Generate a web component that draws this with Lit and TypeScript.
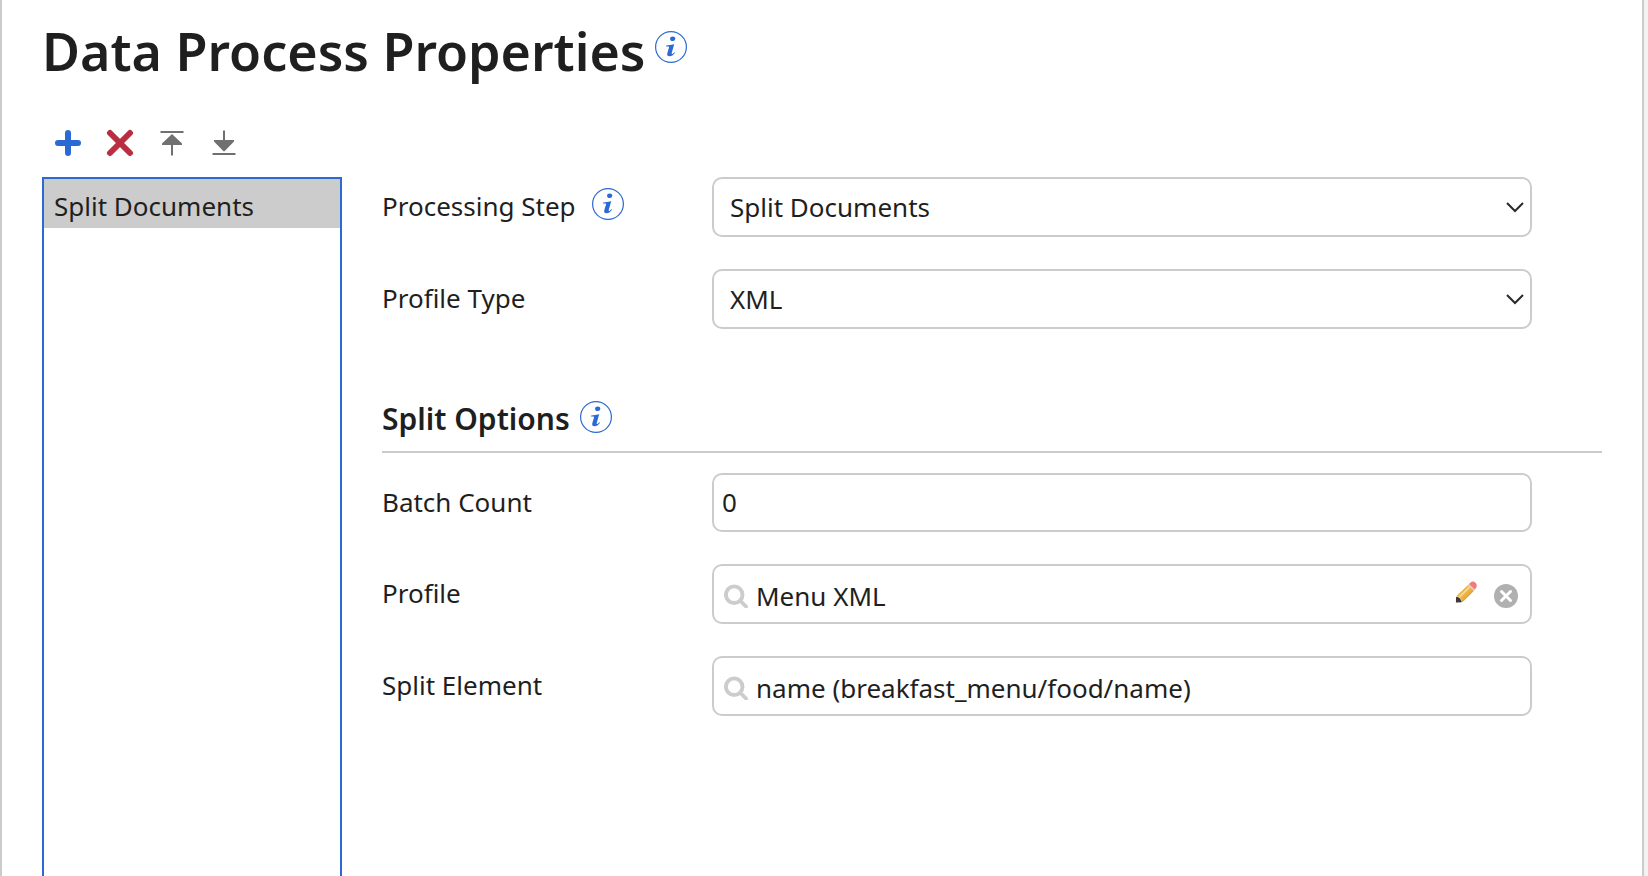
import { LitElement, html, css, svg } from "lit";
import { customElement, property, state } from "lit/decorators.js";

@customElement("info-button")
class InfoButton extends LitElement {
  @property() label = "";

  static styles = css`
    :host {
      display: block;
      width: 32px;
      height: 32px;
    }
    .info {
      display: block;
      width: 32px;
      height: 32px;
      padding: 0;
      border: 0;
      background: none;
      cursor: pointer;
    }
    .glyph {
      display: block;
    }
  `;

  render() {
    return html`<button class="info" type="button" aria-label=${this.label}>
      <svg class="glyph" width="32" height="32" viewBox="0 0 32 32" aria-hidden="true">
        <circle cx="16" cy="16" r="15.4" fill="none" stroke="#2b6ad4" stroke-width="1.2" />
        <ellipse cx="17.7" cy="7.7" rx="2.6" ry="2.3" fill="#2b6ad4" />
        <path
          fill="#2b6ad4"
          d="M11.2 14.6C13.6 14.2 16.4 13.7 19.2 13.2L16.7 22.1C16.5 23 16.9 23.3 17.5 23C18.1 22.7 18.6 22.1 19.3 21.2L20 21.7C18.4 24.1 16.5 25.2 14.4 25.2C12.6 25.2 11.8 24.1 12.3 22.3L14 16.5C14.2 15.6 13.9 15.4 13.1 15.4L11 15.5Z"
        />
      </svg>
    </button>`;
  }
}

const plusIcon = svg`<path d="M14 4v20M4 14h20" fill="none" stroke="#2b6ad4" stroke-width="6" stroke-linecap="round" />`;
const crossIcon = svg`<path d="M4 4l20 20M24 4L4 24" fill="none" stroke="#b92f41" stroke-width="6" stroke-linecap="round" />`;
const topIcon = svg`<path d="M2.5 2h23v2h-23zM14 5l10 9.6v1.4h-9v10.5h-2V16H4v-1.4z" fill="#707070" />`;
const bottomIcon = svg`<path d="M2.5 24h23v2h-23zM13 1.5h2V11h9v1.4L14.5 22.2h-1L4 12.4V11h9z" fill="#707070" />`;

@customElement("app-root")
class AppRoot extends LitElement {
  @state() private steps = ["Split Documents"];
  @state() private selected = 0;

  static styles = css`
    :host {
      display: block;
      min-height: 100vh;
      box-sizing: border-box;
      padding-right: 4px;
      background: #f2f2f2;
      color: #1f1f1f;
      font: 26px/36px "Noto Sans", sans-serif;
    }
    .panel {
      display: flex;
      flex-direction: column;
      min-height: 100vh;
      box-sizing: border-box;
      padding: 15px 40px 0;
      border: solid #ccc;
      border-width: 0 2px;
      background: #fff;
    }
    .heading {
      display: flex;
      gap: 10px;
    }
    h1,
    h2 {
      margin: 0;
      font-weight: 600;
    }
    h1 {
      font-size: 52px;
      line-height: 71px;
    }
    .heading info-button {
      margin-top: 16px;
    }
    .toolbar {
      display: flex;
      margin: 31px 0 8px;
    }
    .tool {
      display: grid;
      place-items: center;
      width: 52px;
      height: 52px;
      padding: 0;
      border: 0;
      background: none;
      cursor: pointer;
    }
    .body {
      display: flex;
      flex: 1;
      gap: 40px;
    }
    .steps {
      flex: none;
      width: 300px;
      box-sizing: border-box;
      margin: 0;
      padding: 0;
      border: solid #2b6ad4;
      border-width: 2px 2px 0;
      list-style: none;
    }
    .step {
      display: block;
      width: 100%;
      padding: 9px 10px 4px;
      border: 0;
      background: none;
      color: inherit;
      font: inherit;
      text-align: left;
    }
    .step.current {
      background: #ccc;
    }
    .form {
      flex: 1;
      min-width: 0;
    }
    .group {
      display: grid;
      gap: 32px;
      padding-right: 70px;
    }
    .row {
      display: grid;
      grid-template-columns: 330px minmax(0, 1fr);
      align-items: start;
    }
    .caption {
      display: flex;
      gap: 16px;
      padding-top: 11px;
    }
    .field {
      display: flex;
      align-items: center;
      position: relative;
      box-sizing: border-box;
      height: 60px;
      border: 2px solid #ccc;
      border-radius: 10px;
      background: #fff;
    }
    .field.short {
      height: 59px;
      padding-bottom: 2px;
    }
    .field.lookup {
      padding: 4px 12px 0 10px;
    }
    .control {
      flex: 1;
      min-width: 0;
      box-sizing: border-box;
      height: 100%;
      margin: 0;
      padding: 0 8px;
      border: 0;
      outline: 0;
      background: none;
      color: inherit;
      font: inherit;
      appearance: none;
    }
    select.control {
      padding: 0 48px 0 16px;
    }
    .chevron {
      position: absolute;
      right: 5px;
      top: 21px;
      pointer-events: none;
    }
    .mini {
      display: grid;
      align-content: start;
      width: 24px;
      height: 24px;
      padding: 0;
      border: 0;
      background: none;
      cursor: pointer;
    }
    .mini.edit {
      height: 30px;
    }
    .mini svg {
      display: block;
      overflow: visible;
    }
    .actions {
      display: flex;
      align-items: center;
      gap: 16px;
    }
    .section {
      display: flex;
      gap: 10px;
      margin: 69px 0 20px;
      padding-bottom: 12px;
      border-bottom: 2px solid #ccc;
    }
    h2 {
      font-size: 30px;
      line-height: 41px;
    }
    .section info-button {
      margin-top: 3px;
    }
  `;

  private tool(label: string, icon: unknown) {
    return html`<button class="tool" type="button" aria-label=${label}>
      <svg width="28" height="28" viewBox="0 0 28 28" aria-hidden="true">${icon}</svg>
    </button>`;
  }

  private selectRow(id: string, label: string, options: string[], info = false) {
    return html`<div class="row">
      <div class="caption">
        <label for=${id}>${label}</label>
        ${info ? html`<info-button label="About this field"></info-button>` : null}
      </div>
      <div class="field">
        <select class="control" id=${id}>
          ${options.map((o) => html`<option>${o}</option>`)}
        </select>
        <svg class="chevron" width="20" height="14" viewBox="0 0 20 14" aria-hidden="true">
          <path d="M2 3l8 8 8-8" fill="none" stroke="#2a2a2a" stroke-width="2" />
        </svg>
      </div>
    </div>`;
  }

  private lookupRow(id: string, label: string, value: string, actions: unknown = null) {
    return html`<div class="row">
      <div class="caption"><label for=${id}>${label}</label></div>
      <div class="field lookup">
        <svg width="24" height="24" viewBox="0 0 24 24" aria-hidden="true">
          <circle cx="10.2" cy="10.7" r="8.3" fill="none" stroke="#ccc" stroke-width="3.9" />
          <path d="M16.5 17l5.6 5.6" stroke="#ccc" stroke-width="3.7" stroke-linecap="round" />
        </svg>
        <input class="control" id=${id} type="text" .value=${value} />
        ${actions}
      </div>
    </div>`;
  }

  render() {
    return html`<main class="panel">
      <div class="heading">
        <h1>Data Process Properties</h1>
        <info-button label="About data process properties"></info-button>
      </div>
      <div class="toolbar" role="toolbar" aria-label="Steps">
        ${this.tool("Add", plusIcon)} ${this.tool("Remove", crossIcon)}
        ${this.tool("Move to top", topIcon)} ${this.tool("Move to bottom", bottomIcon)}
      </div>
      <div class="body">
        <ul class="steps">
          ${this.steps.map(
            (s, i) => html`<li>
              <button
                type="button"
                class="step ${i === this.selected ? "current" : ""}"
                @click=${() => (this.selected = i)}
              >${s}</button>
            </li>`
          )}
        </ul>
        <form class="form" @submit=${(e: Event) => e.preventDefault()}>
          <div class="group">
            ${this.selectRow("processing", "Processing Step", ["Split Documents"], true)}
            ${this.selectRow("type", "Profile Type", ["XML"])}
          </div>
          <div class="section">
            <h2>Split Options</h2>
            <info-button label="About split options"></info-button>
          </div>
          <div class="group">
            <div class="row">
              <div class="caption"><label for="batch">Batch Count</label></div>
              <div class="field short">
                <input class="control" id="batch" type="text" inputmode="numeric" .value=${"0"} />
              </div>
            </div>
            ${this.lookupRow(
              "profile",
              "Profile",
              "Menu XML",
              html`<div class="actions">
                <button class="mini edit" type="button" aria-label="Edit">
                  <svg width="24" height="24" viewBox="-0.5 -0.7 24 24" aria-hidden="true">
                    <path d="M1.500 14.300L7.500 20.300L1.500 20.800Z" fill="#e9c9a0" />
                    <path d="M1.600 15.200L4.800 15.600L7.300 19.700L6.800 20.500L1.400 20.800Z" fill="#3a3a3a" />
                    <path d="M2 14.300L13.800 3L19.700 8.800L7.900 20.400L6.500 17.200L4.500 16Z" fill="#eeb23c" />
                    <path d="M4.500 15.700L15.600 4.800" stroke="#f5d9a0" stroke-width="1.800" />
                    <path d="M7.700 19.600L18.800 8.600" stroke="#dda24a" stroke-width="1.600" />
                    <path d="M13.200 3.600L15 1.900L20.700 7.500L19 9.300Z" fill="#d5cfc9" />
                    <path d="M14.700 2.200L16 .9C17.700-.6 19.700-.3 21 1.100C22.500 2.600 22.800 4.800 21.500 6.300L20.300 7.700Z" fill="#f27a7a" />
                  </svg>
                </button>
                <button class="mini" type="button" aria-label="Clear">
                  <svg width="24" height="24" viewBox="0 0 24 24" aria-hidden="true">
                    <circle cx="12" cy="12" r="12" fill="#b0b0b0" />
                    <path d="M7.500 7.500l9 9M16.500 7.500l-9 9" stroke="#fff" stroke-width="3" stroke-linecap="round" />
                  </svg>
                </button>
              </div>`
            )}
            ${this.lookupRow("element", "Split Element", "name (breakfast_menu/food/name)")}
          </div>
        </form>
      </div>
    </main>`;
  }
}
